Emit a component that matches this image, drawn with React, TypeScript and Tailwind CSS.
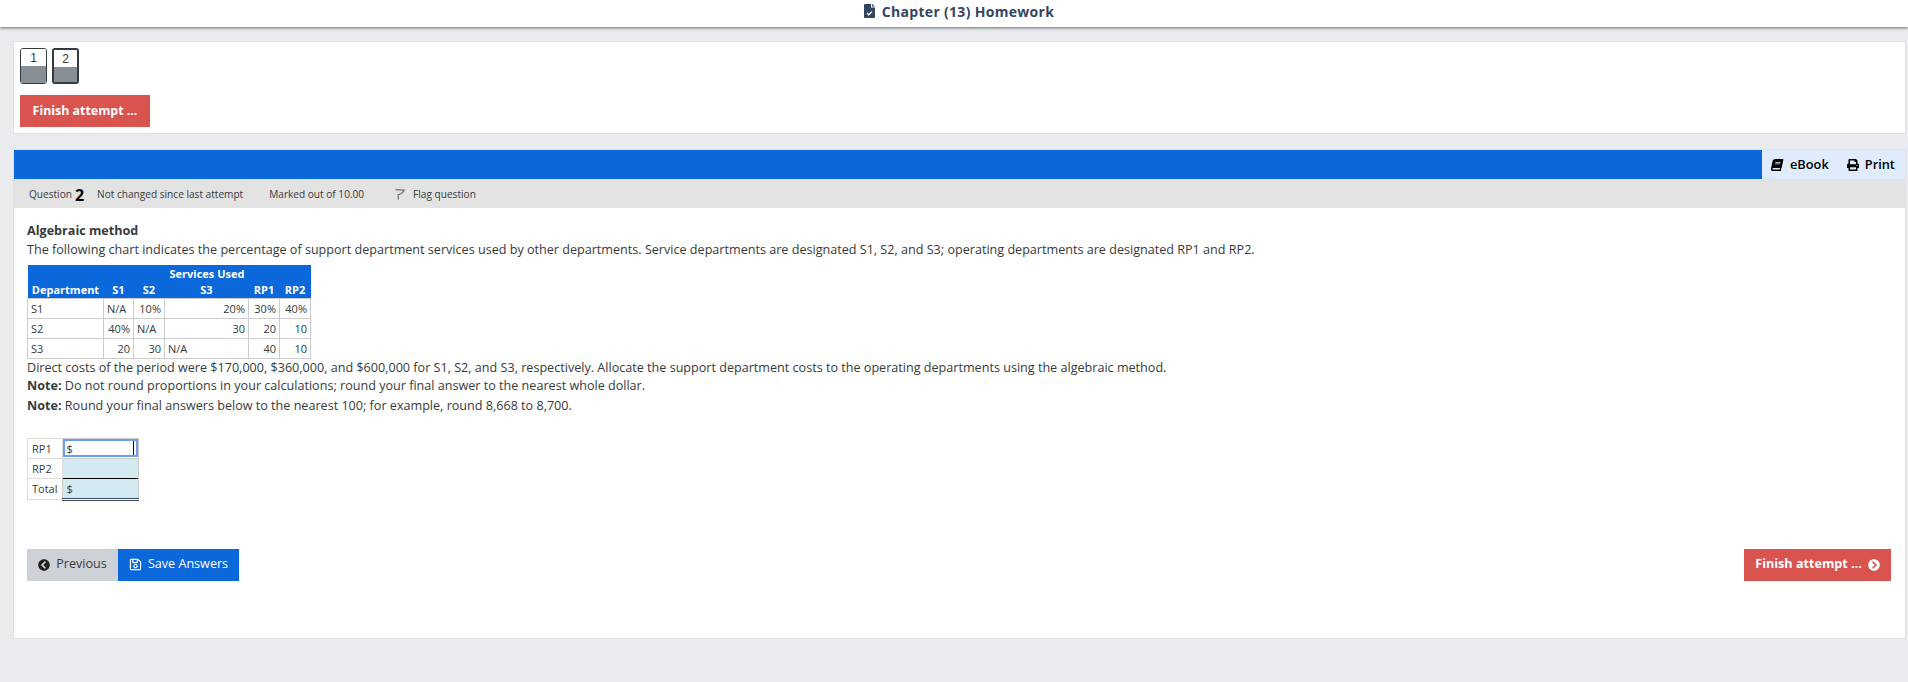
import { FaBook, FaChevronCircleLeft, FaChevronCircleRight, FaPrint, FaRegSave } from 'react-icons/fa';

const rows = [
  ['S1', 'N/A', '10%', '20%', '30%', '40%'],
  ['S2', '40%', 'N/A', '30', '20', '10'],
  ['S3', '20', '30', 'N/A', '40', '10'],
];

const widths = ['w-[76px]', 'w-[30px]', 'w-[31px]', 'w-[84px]', 'w-[31px]', 'w-[31px]'];

function FileCheck() {
  return (
    <svg width="11" height="14" viewBox="0 0 11 14" className="mr-[7px]">
      <path d="M1 0h6v3.5h4V13a1 1 0 0 1-1 1H1a1 1 0 0 1-1-1V1a1 1 0 0 1 1-1z" fill="#34465f" />
      <path d="M8 0l3 2.6H8z" fill="#34465f" />
      <path d="M3 9l1.8 1.8L8 7.6" fill="none" stroke="#fff" strokeWidth="1.3" />
    </svg>
  );
}

function QuestionBox({ n, current }: { n: number; current?: boolean }) {
  return (
    <div className={`flex h-9 w-[27px] flex-col overflow-hidden rounded-[3px] border-[#343a40] ${current ? 'border-2' : 'border'}`}>
      <div className="flex h-[17px] items-center justify-center bg-white font-['Liberation_Sans',sans-serif] text-xs leading-none text-[#343a40]">{n}</div>
      <div className="flex-1 bg-[#868e96]" />
    </div>
  );
}

export default function App() {
  return (
    <div className="h-[682px] overflow-hidden bg-[#e9ebee] font-['Open_Sans',sans-serif] text-[12.6px] text-[#373a3c]">
      <header className="flex h-[27px] items-center justify-center bg-white pb-[5px] pl-[10px] shadow-[0_1px_3px_rgba(0,0,0,0.55)]">
        <FileCheck />
        <h1 className="text-[14px] font-bold tracking-[0.3px] text-[#34465f]">Chapter (13) Homework</h1>
      </header>

      <section className="ml-[13px] mr-[2px] mt-[14px] h-[93px] border border-[#dee2e6] bg-white px-[6px] pt-[6px]">
        <div className="flex gap-[5px]">
          <QuestionBox n={1} />
          <QuestionBox n={2} current />
        </div>
        <button className="mt-[11px] flex h-8 w-[130px] items-center justify-center bg-[#d9534f] text-[12.4px] font-bold text-white">
          Finish attempt ...
        </button>
      </section>

      <section className="ml-[13px] mr-[2px] mt-[15px] h-[490px] border border-[#dee2e6] bg-white">
        <div className="flex h-[29px] bg-[#0a68da]">
          <div className="ml-auto flex w-[143px] items-center gap-[18px] bg-[#deecfd] pl-[9px] text-[12.8px] font-semibold text-black">
            <span className="flex items-center gap-[7px]"><FaBook size={12} className="-skew-x-12" />eBook</span>
            <span className="flex items-center gap-[6px]"><FaPrint size={12} />Print</span>
          </div>
        </div>

        <div className="flex h-[29px] items-center bg-[#e3e3e3] pl-[15px] pt-[3px] text-[10.1px]">
          <span>Question</span>
          <span className="ml-[3px] text-[16px] font-bold leading-none text-black">2</span>
          <span className="ml-[13px]">Not changed since last attempt</span>
          <span className="ml-[26px]">Marked out of 10.00</span>
          <span className="ml-[31px] flex items-center gap-[8px]">
            <svg width="10" height="11" viewBox="0 0 10 11">
              <path d="M0.5 0.5L9.5 1L6.5 4.5L3 6L3.5 10.5" fill="none" stroke="#777" strokeWidth="1.3" />
            </svg>
            Flag question
          </span>
        </div>

        <div className="pl-[13px] pt-[14px]">
          <p className="font-bold leading-[18px]">Algebraic method</p>
          <p className="leading-[19px]">The following chart indicates the percentage of support department services used by other departments. Service departments are designated S1, S2, and S3; operating departments are designated RP1 and RP2.</p>

          <table className="mt-[6px] table-fixed border-collapse text-[11px] leading-none">
            <thead className="bg-[#0a68da] font-bold text-white">
              <tr className="h-[17px]">
                <th colSpan={6} className="pl-[76px] text-center font-bold">Services Used</th>
              </tr>
              <tr className="h-[16px]">
                {['Department', 'S1', 'S2', 'S3', 'RP1', 'RP2'].map((h, i) => (
                  <th key={h} className={`${widths[i]} px-[3px] text-center font-bold`}>{h}</th>
                ))}
              </tr>
            </thead>
            <tbody>
              {rows.map((row) => (
                <tr key={row[0]} className="h-5">
                  {row.map((cell, i) => (
                    <td key={i} className={`border border-[#cccccc] px-[3px] ${cell === 'N/A' || i === 0 ? 'text-left' : 'text-right'}`}>{cell}</td>
                  ))}
                </tr>
              ))}
            </tbody>
          </table>

          <p className="leading-[18px]">Direct costs of the period were $170,000, $360,000, and $600,000 for S1, S2, and S3, respectively. Allocate the support department costs to the operating departments using the algebraic method.</p>
          <p className="leading-[18px]"><b>Note:</b> Do not round proportions in your calculations; round your final answer to the nearest whole dollar.</p>
          <p className="leading-[21px]"><b>Note:</b> Round your final answers below to the nearest 100; for example, round 8,668 to 8,700.</p>

          <table className="mt-[22px] table-fixed border-collapse text-[11px] leading-none">
            <tbody>
              <tr className="h-5">
                <td className="w-[34px] border border-[#dddddd] px-[4px]">RP1</td>
                <td className="w-[76px] border border-[#cccccc] p-0">
                  <div className="flex h-[18px] items-center justify-between border-2 border-[#6d9eeb] bg-white pl-[2px] pr-[2px]">
                    <span>$</span>
                    <span className="h-[14px] w-px bg-black" />
                  </div>
                </td>
              </tr>
              <tr className="h-5">
                <td className="border border-[#dddddd] px-[4px]">RP2</td>
                <td className="border border-[#cccccc] border-b-black bg-[#d4eaf1]" />
              </tr>
              <tr className="h-[21px]">
                <td className="border border-[#dddddd] px-[4px]">Total</td>
                <td className="border-x border-b-[3px] border-x-[#cccccc] border-b-[#34465f] border-double bg-[#d4eaf1] px-[4px]">$</td>
              </tr>
            </tbody>
          </table>

          <div className="mr-[14px] mt-[48px] flex items-center justify-between">
            <div className="flex">
              <button className="flex h-8 w-[91px] items-center justify-center gap-[6px] bg-[#ced2d8] text-[#373a3c]">
                <FaChevronCircleLeft size={12} className="text-[#222]" />Previous
              </button>
              <button className="flex h-8 w-[121px] items-center justify-center gap-[6px] bg-[#0a68da] text-white">
                <FaRegSave size={13} />Save Answers
              </button>
            </div>
            <button className="flex h-8 w-[147px] items-center justify-center gap-[6px] bg-[#d9534f] font-bold text-white">
              Finish attempt ...<FaChevronCircleRight size={12} />
            </button>
          </div>
        </div>
      </section>
    </div>
  );
}
